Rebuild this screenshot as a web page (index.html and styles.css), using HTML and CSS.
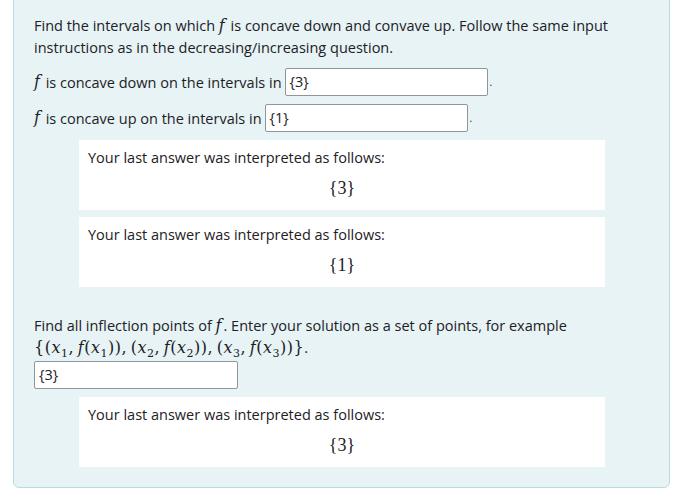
FILE: index.html
```html
<!DOCTYPE html>
<html>
<head>
<meta charset="utf-8">
<link rel="stylesheet" href="styles.css">
</head>
<body>
<div class="que">
  <p class="text">Find the intervals on which <span class="mi">f</span> is concave down and convave up. Follow the same input instructions as in the decreasing/increasing question.</p>
  <div class="row row-first"><span class="mi">f</span>&nbsp;is concave down on the intervals in <span class="input w203">{3}</span><span class="dot">.</span></div>
  <div class="row"><span class="mi">f</span>&nbsp;is concave up on the intervals in <span class="input w203">{1}</span><span class="dot">.</span></div>
  <div class="feedback first-fb">
    <div class="fb-text">Your last answer was interpreted as follows:</div>
    <div class="fb-math">{3}</div>
  </div>
  <div class="feedback">
    <div class="fb-text">Your last answer was interpreted as follows:</div>
    <div class="fb-math">{1}</div>
  </div>
  <p class="text second">Find all inflection points of <span class="mi">f</span>. Enter your solution as a set of points, for example<br><span class="math">{(<i>x</i><sub>1</sub>,&thinsp;<i>f</i>(<i>x</i><sub>1</sub>)),&thinsp;(<i>x</i><sub>2</sub>,&thinsp;<i>f</i>(<i>x</i><sub>2</sub>)),&thinsp;(<i>x</i><sub>3</sub>,&thinsp;<i>f</i>(<i>x</i><sub>3</sub>))}</span>.</p>
  <div class="row-block"><span class="input w204">{3}</span></div>
  <div class="feedback first-fb">
    <div class="fb-text">Your last answer was interpreted as follows:</div>
    <div class="fb-math">{3}</div>
  </div>
</div>
</body>
</html>
```
FILE: styles.css
```css
html, body {
  margin: 0;
  padding: 0;
  background: #ffffff;
}
body {
  font-family: "Open Sans", "Noto Sans", sans-serif;
  font-size: 14.5px;
  color: #1d2125;
}
.que {
  margin: -6px 0 0 13px;
  width: 657px;
  background: #e7f3f5;
  border: 1px solid #b8dce2;
  border-radius: 0 0 6px 6px;
  padding: 20px 20px 20px 20px;
  box-sizing: border-box;
}
.text {
  margin: 0;
  line-height: 22px;
}
.mi {
  font-family: "DejaVu Serif", "Liberation Serif", serif;
  font-style: italic;
  font-size: 16px;
  line-height: 1;
  margin-right: 2px;
}
.row {
  display: flex;
  align-items: center;
  height: 28px;
  margin-top: 8px;
  white-space: nowrap;
}
.row-first {
  margin-top: 9px;
}
.input {
  display: inline-block;
  box-sizing: border-box;
  height: 28px;
  line-height: 26px;
  border: 1px solid #8f959e;
  border-radius: 2px;
  background: #fff;
  padding: 0 4px;
  margin-left: 3px;
}
.w203 { width: 203px; }
.w204 { width: 204px; margin-left: 0; }
.dot {
  margin-left: 2px;
  font-size: 10px;
  align-self: center;
}
.feedback {
  background: #ffffff;
  margin: 7px 44px 0 45px;
  height: 70px;
  padding: 8px 9px 0 9px;
  box-sizing: border-box;
}
.first-fb {
  margin-top: 8px;
}
.fb-text {
  line-height: 20px;
}
.fb-math {
  text-align: center;
  font-family: "Liberation Serif", "DejaVu Serif", serif;
  font-size: 18px;
  line-height: 20px;
  margin-top: 10px;
}
.second {
  margin-top: 28px;
}
.math {
  font-family: "DejaVu Serif", "Liberation Serif", serif;
  font-size: 16px;
  letter-spacing: 0.5px;
}
.math i {
  font-style: italic;
}
.math sub {
  font-size: 11px;
  font-style: normal;
  line-height: 0;
}
.row-block {
  margin-top: 2px;
  height: 28px;
}
```
